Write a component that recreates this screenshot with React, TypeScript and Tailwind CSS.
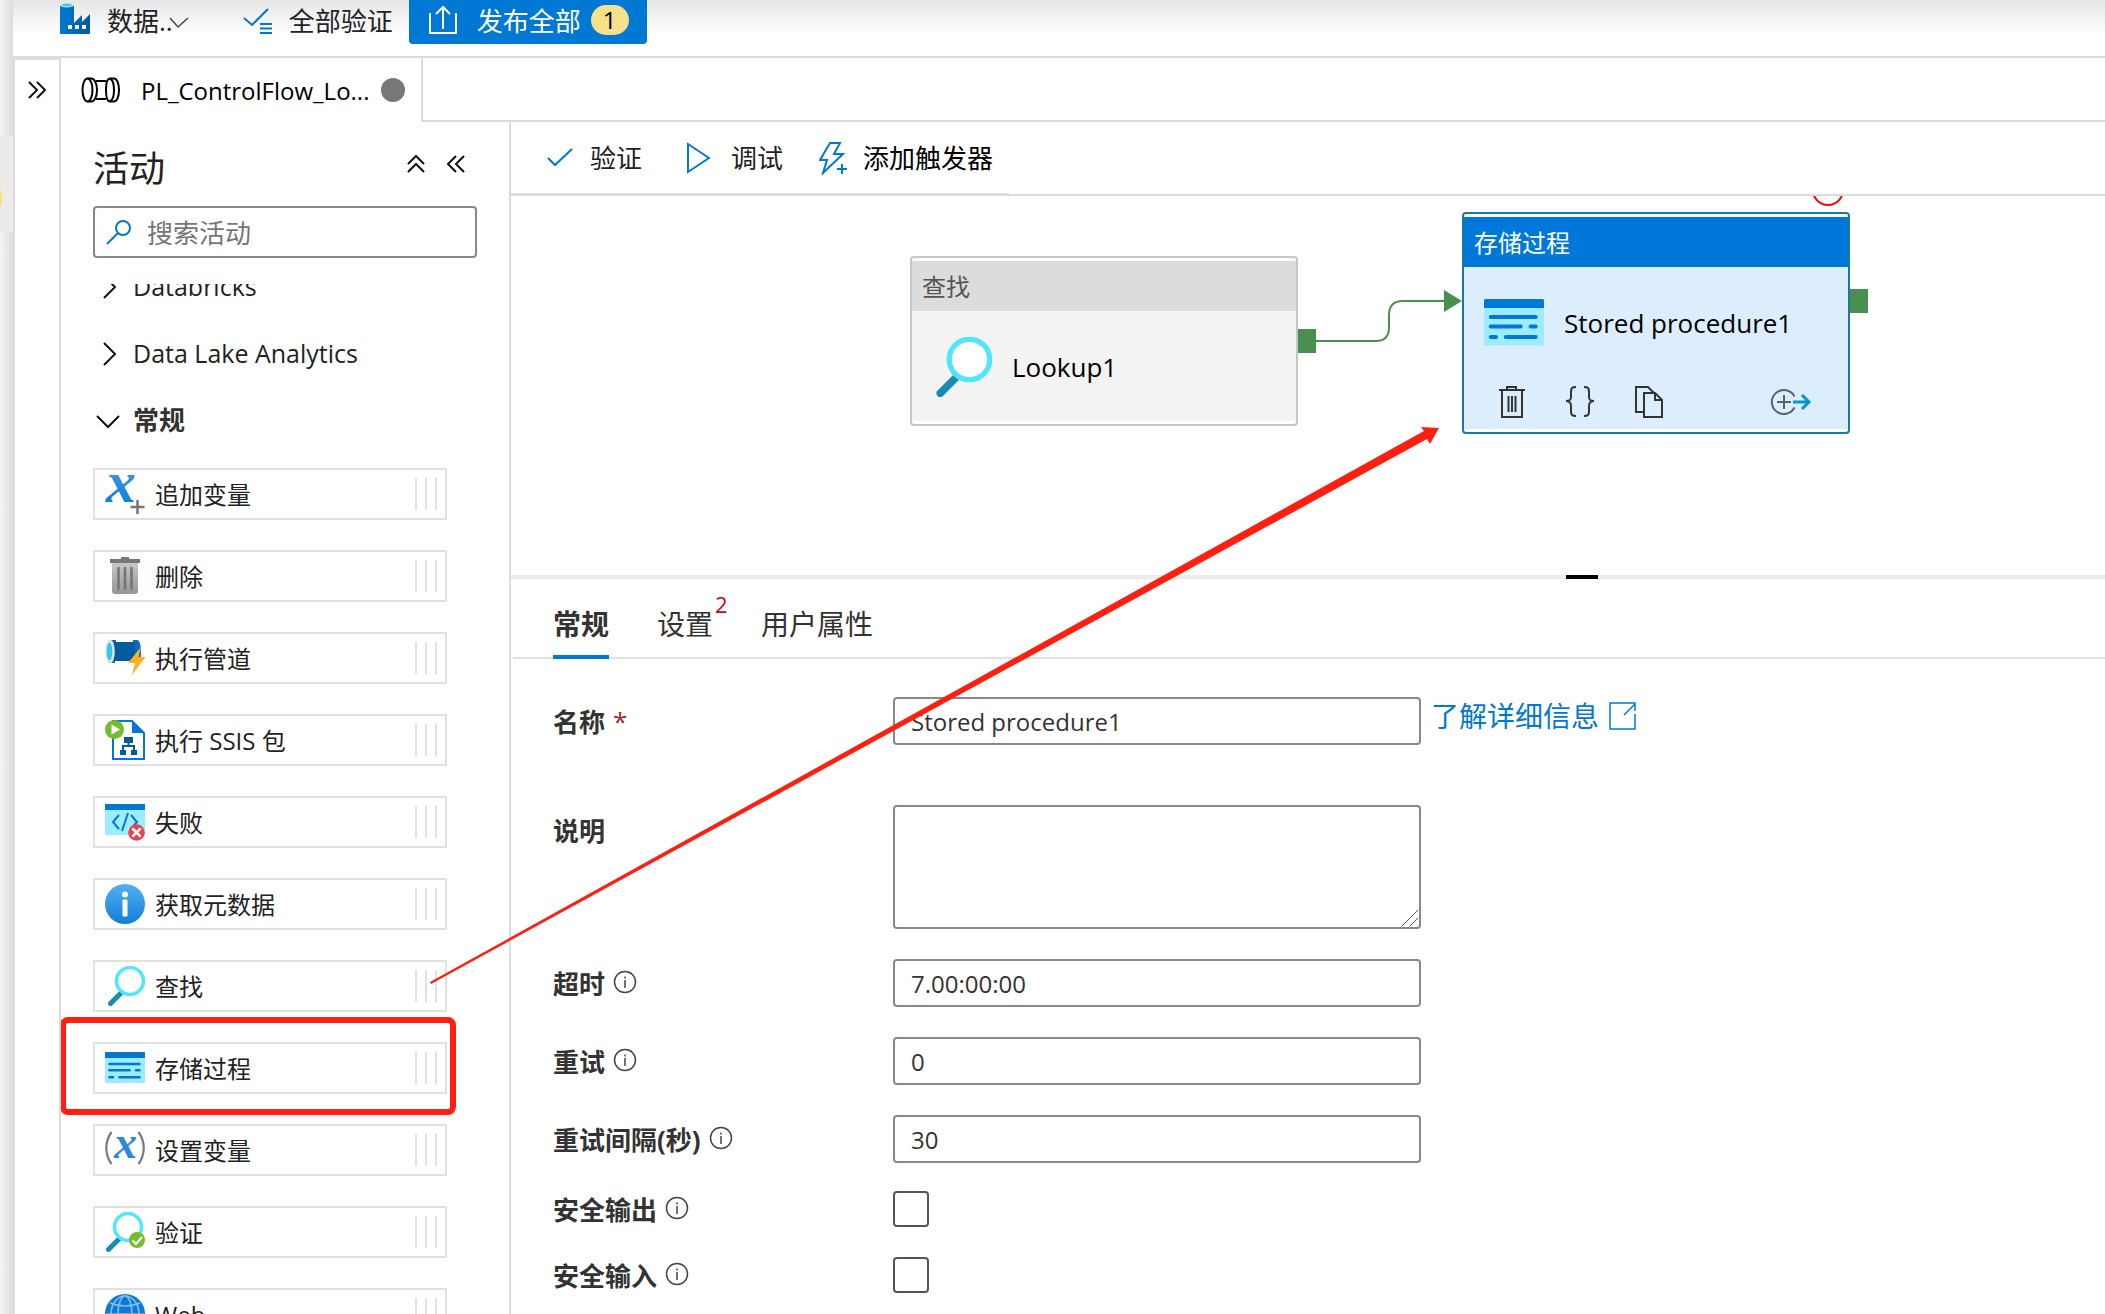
import { ReactNode, useState } from "react";

type Activity = {
  label: string;
  icon: ReactNode;
  selected?: boolean;
};

function FactoryIcon() {
  return (
    <svg width="32" height="32" viewBox="0 0 32 32" aria-hidden="true">
      <defs>
        <linearGradient id="factory" x1="0" x2="1">
          <stop offset="0" stopColor="#0078d4" />
          <stop offset="1" stopColor="#005ba1" />
        </linearGradient>
      </defs>
      <path d="M1 3h14v18l8-8v7l8-8v19a1 1 0 0 1-1 1H2a1 1 0 0 1-1-1z" fill="url(#factory)" />
      <ellipse cx="8" cy="3" rx="7" ry="2.5" fill="#e6e6e6" />
      <ellipse cx="8" cy="3" rx="5" ry="1.6" fill="#32d4f5" />
      <path d="M9 23h4v4H9zM16 23h4v4h-4zM23 23h4v4h-4z" fill="#fff" />
    </svg>
  );
}

function CheckIcon() {
  return (
    <svg width="28" height="20" viewBox="0 0 28 20" fill="none" stroke="#0078d4" strokeWidth="2" aria-hidden="true">
      <path d="M2 10l7 7L26 1" />
    </svg>
  );
}

function ValidateAllIcon() {
  return (
    <svg width="30" height="26" viewBox="0 0 30 26" fill="none" stroke="#0078d4" strokeWidth="2" aria-hidden="true">
      <path d="M1 10l8 7L25 1M17 16h12M17 20.500h12M17 25h12" />
    </svg>
  );
}

function PublishIcon() {
  return (
    <svg width="28" height="30" viewBox="0 0 28 30" fill="none" stroke="#fff" strokeWidth="2" aria-hidden="true">
      <path d="M1 8v20h26V8M14 24V2M7 9l7-7 7 7" />
    </svg>
  );
}

function PipelineIcon() {
  return (
    <svg width="40" height="26" viewBox="0 0 40 26" fill="none" stroke="#000" strokeWidth="2" aria-hidden="true">
      <ellipse cx="6.500" cy="13" rx="5" ry="11.500" />
      <path d="M6.500 1.500h4c3 0 5.500 5 5.500 11.500s-2.500 11.500-5.500 11.500h-4M15 4h10M15 22h10" />
      <path d="M29 1.500c-3 0-4 5-4 11.500s1 11.500 4 11.500M29 1.500h4c3 0 5 5 5 11.500s-2 11.500-5 11.500h-4" />
      <path d="M29 1.500c2 1 4 5 4 11.500s-2 10.500-4 11.500" />
    </svg>
  );
}

function DoubleChevron({ direction }: { direction: "right" | "left" | "up" }) {
  const paths = {
    right: "M2 2l8 8-8 8M10 2l8 8-8 8",
    left: "M10 2l-8 8 8 8M18 2l-8 8 8 8",
    up: "M2 10l8-8 8 8M2 18l8-8 8 8",
  };
  return (
    <svg width="20" height="20" viewBox="0 0 20 20" fill="none" stroke="#111" strokeWidth="2" aria-hidden="true">
      <path d={paths[direction]} />
    </svg>
  );
}

function Chevron({ open }: { open?: boolean }) {
  return (
    <svg width="26" height="26" viewBox="0 0 26 26" fill="none" stroke="#111" strokeWidth="2" aria-hidden="true">
      <path d={open ? "M2 8l11 11L24 8" : "M9 2l11 11L9 24"} />
    </svg>
  );
}

function MagnifierIcon({ size = 40, checked }: { size?: number; checked?: boolean }) {
  return (
    <svg width={size} height={size} viewBox="0 0 40 40" fill="none" aria-hidden="true">
      <path d={checked ? "M3.500 37.500L14 27" : "M5.500 37.500L16 27"} stroke="#198ab3" strokeWidth="5" strokeLinecap="round" />
      <circle cx={checked ? 23 : 25} cy="15" r="13.500" fill="#fff" stroke="#50e6ff" strokeWidth="3.500" />
      {checked && (
        <>
          <circle cx="32" cy="28" r="8" fill="#76bc2d" />
          <path d="M27.500 28.500l3.500 3.500 6-7" stroke="#fff" strokeWidth="2" />
        </>
      )}
    </svg>
  );
}

function StoredProcedureIcon({ size = 40 }: { size?: number }) {
  return (
    <svg width={size} height={size} viewBox="0 0 40 40" aria-hidden="true">
      <rect y="4" width="40" height="31" rx="1" fill="#9cebff" />
      <path d="M0 5a1 1 0 0 1 1-1h38a1 1 0 0 1 1 1v5H0z" fill="#0078d4" />
      <path
        d="M4.500 16h30M4.500 22.300h20M31 22.300h3.500M4.500 29.300h3.500M14.500 29.300h20"
        stroke="#0078d4"
        strokeWidth="2.600"
        strokeLinecap="round"
      />
    </svg>
  );
}

function AppendVariableIcon() {
  return (
    <svg width="40" height="40" viewBox="0 0 40 40" aria-hidden="true">
      <defs>
        <linearGradient id="variable" x1="0" x2="0" y1="0" y2="1">
          <stop offset="0" stopColor="#5ea0ef" />
          <stop offset="1" stopColor="#0078d4" />
        </linearGradient>
      </defs>
      <text x="1" y="28" fontFamily="Liberation Serif, serif" fontStyle="italic" fontWeight="700" fontSize="60" fill="url(#variable)">
        x
      </text>
      <path d="M32.500 26v14M25.500 33h14" stroke="#767676" strokeWidth="2.500" />
    </svg>
  );
}

function SetVariableIcon() {
  return (
    <svg width="40" height="40" viewBox="0 0 40 40" aria-hidden="true">
      <text x="9" y="28" fontFamily="Liberation Serif, serif" fontStyle="italic" fontWeight="700" fontSize="46" fill="#2f86e0">
        x
      </text>
      <path d="M6.500 2C-.5 12-.5 24 6.500 34M33.500 2c7 10 7 22 0 32" fill="none" stroke="#7a7a7a" strokeWidth="2.200" />
    </svg>
  );
}

function DeleteIcon() {
  return (
    <svg width="40" height="40" viewBox="0 0 40 40" aria-hidden="true">
      <defs>
        <linearGradient id="bin" x1="0" x2="0" y1="0" y2="1">
          <stop offset="0" stopColor="#c8c8c8" />
          <stop offset="1" stopColor="#969696" />
        </linearGradient>
      </defs>
      <path d="M7 6h26v29a3 3 0 0 1-3 3H10a3 3 0 0 1-3-3z" fill="url(#bin)" />
      <path d="M5 3h11V1h8v2h11v4H5z" fill="#767676" />
      <path d="M13.500 12v21M20 12v21M26.500 12v21" stroke="#767676" strokeWidth="2.600" strokeLinecap="round" />
    </svg>
  );
}

function ExecutePipelineIcon() {
  return (
    <svg width="40" height="40" viewBox="0 0 40 40" aria-hidden="true">
      <path d="M5 2h6l-1 23H5zM28 2h4c3 0 4 6 4 12s-1 11-4 11h-4z" fill="#0f6cbd" />
      <path d="M9 4h21v19H9z" fill="#005ba1" />
      <ellipse cx="5" cy="13.500" rx="4.800" ry="12" fill="#dfe3e6" />
      <ellipse cx="4.500" cy="13.500" rx="2.800" ry="9" fill="#32c9e8" />
      <path d="M36 9L23 25h7l-3 12 13.500-18h-7z" fill="#ffb020" />
    </svg>
  );
}

function ExecuteSsisIcon() {
  return (
    <svg width="40" height="40" viewBox="0 0 40 40" aria-hidden="true">
      <path d="M8 1h19l12 12v26H8z" fill="#fff" stroke="#0078d4" strokeWidth="2" />
      <path d="M27 1v12h12z" fill="#0078d4" />
      <path d="M19 17h9v6h-9zM15 30h6v5h-6zM26 30h6v5h-6z" fill="#005ba1" />
      <path d="M23.500 22v4M18 31v-5h11v5" fill="none" stroke="#005ba1" strokeWidth="2" />
      <circle cx="9.500" cy="9.500" r="9.500" fill="#76bc2d" />
      <path d="M6.500 4.500v10l8.500-5z" fill="#fff" />
    </svg>
  );
}

function FailIcon() {
  return (
    <svg width="40" height="40" viewBox="0 0 40 40" fill="none" aria-hidden="true">
      <rect y="2" width="40" height="31" rx="1" fill="#9cebff" />
      <path d="M0 2h40v6H0z" fill="#0078d4" />
      <path d="M14 13l-6 7 6 7M26 13l6 7-6 7M23 11l-6 18" stroke="#0078d4" strokeWidth="2" />
      <circle cx="31.500" cy="30.500" r="8.300" fill="#ef4050" />
      <path d="M28 27l7 7M35 27l-7 7" stroke="#fff" strokeWidth="2.500" strokeLinecap="round" />
    </svg>
  );
}

function MetadataIcon() {
  return (
    <svg width="40" height="40" viewBox="0 0 40 40" aria-hidden="true">
      <defs>
        <linearGradient id="meta" x1="0" x2="0" y1="0" y2="1">
          <stop offset="0" stopColor="#55aef0" />
          <stop offset="1" stopColor="#1080d8" />
        </linearGradient>
      </defs>
      <circle cx="20" cy="20" r="20" fill="url(#meta)" />
      <circle cx="20" cy="10.500" r="3" fill="#fff" />
      <rect x="17.500" y="15.500" width="5" height="17" rx="1" fill="#fff" />
    </svg>
  );
}

function WebIcon() {
  return (
    <svg width="40" height="40" viewBox="0 0 40 40" aria-hidden="true">
      <circle cx="20" cy="20" r="20" fill="#0f78d4" />
      <g fill="none" stroke="#7fc0f5" strokeWidth="1.600">
        <ellipse cx="20" cy="20" rx="7" ry="18" />
        <ellipse cx="20" cy="20" rx="14" ry="18" />
        <path d="M5 9c9 4 21 4 30 0M1 20h38" />
      </g>
    </svg>
  );
}

function InfoIcon() {
  return (
    <svg width="24" height="24" viewBox="0 0 24 24" fill="none" stroke="#444" aria-hidden="true">
      <circle cx="12" cy="12" r="10.500" strokeWidth="1.500" />
      <path d="M12 10v8M12 6.500v2" strokeWidth="1.500" />
    </svg>
  );
}

const activities: Activity[] = [
  { label: "追加变量", icon: <AppendVariableIcon /> },
  { label: "删除", icon: <DeleteIcon /> },
  { label: "执行管道", icon: <ExecutePipelineIcon /> },
  { label: "执行 SSIS 包", icon: <ExecuteSsisIcon /> },
  { label: "失败", icon: <FailIcon /> },
  { label: "获取元数据", icon: <MetadataIcon /> },
  { label: "查找", icon: <MagnifierIcon /> },
  { label: "存储过程", icon: <StoredProcedureIcon />, selected: true },
  { label: "设置变量", icon: <SetVariableIcon /> },
  { label: "验证", icon: <MagnifierIcon checked /> },
  { label: "Web", icon: <WebIcon /> },
];

function TopBar() {
  return (
    <header className="flex h-[58px] shrink-0 items-start border-b-2 border-[#dcdcdc] bg-linear-to-b from-[#e6e6e6] to-white to-[36px] pl-[46px] text-[26px] leading-[42px] text-[#222]">
      <button className="flex h-[42px] items-start gap-4">
        <span className="pt-[2px]">
          <FactoryIcon />
        </span>
        <span className="flex items-center">
          数据..
          <svg className="mt-1 -ml-1" width="20" height="14" viewBox="0 0 20 14" fill="none" stroke="#444" strokeWidth="1.500" aria-hidden="true">
            <path d="M1 2l8 9 10-9" />
          </svg>
        </span>
      </button>
      <button className="ml-[54px] flex h-[42px] items-center gap-4">
        <ValidateAllIcon />
        全部验证
      </button>
      <button className="ml-4 flex h-11 items-start rounded-b bg-[#0078d4] pr-[18px] pl-5 text-white">
        <span className="pt-[5px]">
          <PublishIcon />
        </span>
        <span className="ml-5">发布全部</span>
        <span className="mt-[5px] ml-[10px] h-[30px] w-[38px] rounded-full bg-[#f7e08a] text-center text-[24px] leading-[30px] text-black">
          1
        </span>
      </button>
    </header>
  );
}

function ActivityPane() {
  const [query, setQuery] = useState("");

  return (
    <aside className="flex w-[450px] shrink-0 flex-col border-r-2 border-[#dcdcdc]">
      <div className="flex h-[84px] items-center gap-5 pr-[43px] pl-8">
        <h2 className="mr-auto pt-[10px] text-[36px] leading-[48px] text-[#222]">活动</h2>
        <button aria-label="全部折叠">
          <DoubleChevron direction="up" />
        </button>
        <button aria-label="收起">
          <DoubleChevron direction="left" />
        </button>
      </div>
      <label className="mr-8 ml-8 flex h-[52px] shrink-0 items-center gap-[14px] rounded border-2 border-[#888] pl-[10px]">
        <svg width="28" height="28" viewBox="0 0 28 28" fill="none" stroke="#0078d4" strokeWidth="2" className="shrink-0" aria-hidden="true">
          <circle cx="18" cy="10" r="7" />
          <path d="M13 15L2 26" />
        </svg>
        <input
          aria-label="搜索活动"
          placeholder="搜索活动"
          value={query}
          onChange={(event) => setQuery(event.target.value)}
          className="w-full pt-[2px] text-[26px] leading-9 outline-none placeholder:text-[#767676]"
        />
      </label>
      <div className="mt-[26px] min-h-0 flex-1 overflow-hidden">
        <div className="-mt-[31px] pr-[62px] pl-8">
          {["Databricks", "Data Lake Analytics"].map((group) => (
            <button key={group} className="flex h-[67px] w-full items-center gap-3 pl-[2px] text-[25px] font-medium text-[#222]">
              <Chevron />
              {group}
            </button>
          ))}
          <button className="flex h-[67px] w-full items-center gap-3 pl-[2px] text-[26px] font-bold text-[#333]">
            <Chevron open />
            常规
          </button>
          <ul className="mt-[14px] flex flex-col gap-[30px]">
            {activities.map((activity) => (
              <li key={activity.label} className="relative flex h-[52px] items-center gap-[10px] border-2 border-[#e1e1e1] bg-white pr-2 pl-[10px] text-[24px] text-[#222]">
                {activity.icon}
                <span className="pt-[2px]">{activity.label}</span>
                <span className="ml-auto flex h-8 w-[22px] justify-between border-x-2 border-[#e1e1e1] px-2">
                  <span className="w-[2px] bg-[#e1e1e1]" />
                </span>
                {activity.selected && (
                  <span className="absolute -top-[27px] -right-[11px] -bottom-[23px] -left-[35px] rounded-lg border-6 border-[#ff1f10]" />
                )}
              </li>
            ))}
          </ul>
        </div>
      </div>
    </aside>
  );
}

function NodeActions() {
  return (
    <div className="mt-auto flex items-center pr-9 pb-[10px] pl-[34px]">
      <button aria-label="删除">
        <svg width="28" height="34" viewBox="0 0 28 34" fill="none" stroke="#333" strokeWidth="2" aria-hidden="true">
          <path d="M1 5h26M4 5v27h20V5M9 5V2h9v3M10.500 11v16M14 11v16M17.500 11v16" />
        </svg>
      </button>
      <button aria-label="代码" className="ml-[39px]">
        <svg width="30" height="34" viewBox="0 0 30 34" fill="none" stroke="#333" strokeWidth="2" aria-hidden="true">
          <path d="M11 2c-4 0-5 1-5 5v5c0 3-1 4-5 4 4 0 5 2 5 5v5c0 4 1 5 5 5M19 2c4 0 5 1 5 5v5c0 3 1 4 5 4-4 0-5 2-5 5v5c0 4-1 5-5 5" />
        </svg>
      </button>
      <button aria-label="复制" className="ml-[39px]">
        <svg width="30" height="34" viewBox="0 0 30 34" fill="none" stroke="#333" strokeWidth="2" aria-hidden="true">
          <path d="M9 27H2V2h12l6 6M10 8h11l7 7v17H10zM21 8v7h7" />
        </svg>
      </button>
      <button aria-label="添加输出" className="ml-auto">
        <svg width="42" height="28" viewBox="0 0 42 28" fill="none" aria-hidden="true">
          <path d="M24.500 8.500A12 12 0 1 0 24.500 19.500M7 14h14M14 7v14" stroke="#5b5f77" strokeWidth="2" />
          <path d="M23 14h15M32 7l7 7-7 7" stroke="#0099cc" strokeWidth="3" />
        </svg>
      </button>
    </div>
  );
}

function Canvas() {
  return (
    <section className="relative h-[379px] shrink-0 overflow-hidden">
      <svg className="absolute top-0 left-[787px]" width="572" height="160" fill="none" aria-hidden="true">
        <path d="M18 145h60q13 0 13-14v-12q0-14 14-14h42" stroke="#498f4f" strokeWidth="2" />
        <path d="M0 133h18v24H0zM146 94l18 11-18 11zM552 93h18v24h-18z" fill="#498f4f" />
        <circle cx="530" cy="-6" r="15" stroke="#ff0000" strokeWidth="2" />
      </svg>
      <div className="absolute top-[60px] left-[399px] flex h-[170px] w-[388px] flex-col rounded border-2 border-[#c6c6c6] bg-white py-[3px]">
        <div className="h-[50px] bg-[#dcdcdc] pl-[10px] text-[24px] leading-[52px] text-[#555]">查找</div>
        <div className="flex flex-1 items-center gap-5 bg-[#f3f3f3] pt-[2px] pl-5 text-[26px] text-black">
          <MagnifierIcon size={60} />
          Lookup1
        </div>
      </div>
      <div className="absolute top-4 left-[951px] flex h-[222px] w-[388px] flex-col rounded border-2 border-[#1a7a9e] bg-white py-[3px]">
        <div className="h-[50px] bg-[#0078d9] pl-[10px] text-[24px] leading-[52px] text-white">存储过程</div>
        <div className="flex flex-1 flex-col bg-[#dceefe]">
          <div className="flex h-[112px] items-center gap-5 pl-5 text-[26px] text-black">
            <StoredProcedureIcon size={60} />
            Stored procedure1
          </div>
          <NodeActions />
        </div>
      </div>
    </section>
  );
}

function FieldLabel({ htmlFor, children, info, required }: { htmlFor: string; children: string; info?: boolean; required?: boolean }) {
  return (
    <label htmlFor={htmlFor} className="flex w-[340px] shrink-0 items-center gap-2 text-[26px] leading-12 font-bold text-[#333]">
      <span className="pt-[2px]">{children}</span>
      {required && <span className="font-normal text-[#a4262c]">*</span>}
      {info && (
        <span className="pb-[2px]">
          <InfoIcon />
        </span>
      )}
    </label>
  );
}

const inputClass = "w-[528px] rounded border-2 border-[#888] bg-white px-4 pt-[2px] text-[24px] text-[#333] outline-none";

function PropertiesPanel() {
  const [name, setName] = useState("Stored procedure1");
  const [description, setDescription] = useState("");
  const [timeout, setTimeoutValue] = useState("7.00:00:00");
  const [retry, setRetry] = useState("0");
  const [interval, setIntervalValue] = useState("30");

  const textRows = [
    { id: "timeout", label: "超时", value: timeout, onChange: setTimeoutValue },
    { id: "retry", label: "重试", value: retry, onChange: setRetry },
    { id: "interval", label: "重试间隔(秒)", value: interval, onChange: setIntervalValue },
  ];

  return (
    <section className="flex flex-col">
      <nav className="ml-[2px] flex h-20 border-b-2 border-[#e1e1e1] pl-10 text-[28px] leading-[90px] text-[#333]">
        <button className="-mb-[2px] border-b-4 border-[#0078d4] font-bold">常规</button>
        <button className="ml-12 flex">
          设置
          <span className="w-12 pl-[2px] text-left text-[22px] leading-[50px] text-[#d0021b]">2</span>
        </button>
        <button>用户属性</button>
      </nav>
      <form className="flex flex-col pt-[38px] pl-[42px]">
        <div className="flex h-12">
          <FieldLabel htmlFor="name" required>
            名称
          </FieldLabel>
          <input id="name" value={name} onChange={(event) => setName(event.target.value)} className={inputClass} />
          <a href="#" className="ml-[10px] flex h-[38px] items-center gap-[10px] text-[28px] text-[#0078d4]">
            了解详细信息
            <svg width="28" height="28" viewBox="0 0 28 28" fill="none" stroke="#0078d4" strokeWidth="1.500" aria-hidden="true">
              <path d="M18 1H1v26h25V12M15 13L26 2M18 1h8v8" />
            </svg>
          </a>
        </div>
        <div className="mt-[60px] flex items-start">
          <FieldLabel htmlFor="description">说明</FieldLabel>
          <div className="relative flex">
            <textarea
              id="description"
              value={description}
              onChange={(event) => setDescription(event.target.value)}
              className={`${inputClass} h-[124px] resize-none`}
            />
            <svg className="absolute right-[2px] bottom-[2px]" width="18" height="18" viewBox="0 0 18 18" stroke="#555" aria-hidden="true">
              <path d="M1 17L17 1M9 17l8-8" />
            </svg>
          </div>
        </div>
        <div className="mt-[30px] flex flex-col gap-[30px]">
          {textRows.map((row) => (
            <div key={row.id} className="flex h-12">
              <FieldLabel htmlFor={row.id} info>
                {row.label}
              </FieldLabel>
              <input id={row.id} value={row.value} onChange={(event) => row.onChange(event.target.value)} className={inputClass} />
            </div>
          ))}
        </div>
        <div className="mt-[22px] flex flex-col gap-[18px]">
          {["安全输出", "安全输入"].map((label) => (
            <div key={label} className="flex h-12 items-center">
              <FieldLabel htmlFor={label} info>
                {label}
              </FieldLabel>
              <input id={label} type="checkbox" className="size-9 appearance-none rounded border-2 border-[#555] bg-white checked:bg-[#0078d4]" />
            </div>
          ))}
        </div>
      </form>
    </section>
  );
}

export default function App() {
  return (
    <div className="relative flex h-screen overflow-hidden bg-white font-['Open_Sans','Noto_Sans_CJK_SC',sans-serif]">
      <div className="w-[13px] shrink-0 bg-linear-to-r from-[#f5f5f5] to-[#dcdcdc] pt-[136px]">
        <div className="flex h-24 items-center overflow-hidden bg-[#ecebe9] pt-7">
          <span className="-ml-5 h-7 w-[22px] shrink-0 rounded-full bg-[#fde27a]" />
        </div>
      </div>

      <div className="flex min-w-0 flex-1 flex-col">
        <TopBar />
        <div className="flex min-h-0 flex-1">
          <div className="flex w-12 shrink-0 items-start justify-center border-x-2 border-t-2 border-[#dcdcdc] pt-5">
            <button aria-label="展开">
              <DoubleChevron direction="right" />
            </button>
          </div>
          <div className="flex min-w-0 flex-1 flex-col">
            <div className="flex h-16 shrink-0">
              <button className="flex w-[362px] shrink-0 items-center border-r-2 border-[#dcdcdc] pl-5 text-[24px] text-black">
                <PipelineIcon />
                <span className="ml-5 pt-[2px]">PL_ControlFlow_Lo...</span>
                <span className="ml-3 size-6 shrink-0 rounded-full bg-[#777]" />
              </button>
              <div className="flex-1 border-b-2 border-[#dcdcdc]" />
            </div>
            <div className="flex min-h-0 flex-1">
              <ActivityPane />
              <main className="flex min-w-0 flex-1 flex-col">
                <div className="flex h-[74px] shrink-0 border-b-2 border-[#dcdcdc] text-[26px] text-[#222]">
                  <div className="flex border-b border-[#dcdcdc] pr-4 pl-[35px]">
                    <button className="flex items-center gap-4">
                      <CheckIcon />
                      <span className="pt-[2px]">验证</span>
                    </button>
                    <button className="ml-[45px] flex items-center gap-5">
                      <svg width="24" height="32" viewBox="0 0 24 32" fill="none" stroke="#0078d4" strokeWidth="2" aria-hidden="true">
                        <path d="M1 2v28l21-14z" />
                      </svg>
                      <span className="pt-[2px]">调试</span>
                    </button>
                    <button className="ml-9 flex items-center gap-4 text-black">
                      <svg width="28" height="34" viewBox="0 0 28 34" fill="none" stroke="#0078d4" strokeWidth="2" aria-hidden="true">
                        <path d="M11 2h10l-6 11h9L4 32l4-13H1zM23 23v10M18 28h10" />
                      </svg>
                      <span className="pt-[2px]">添加触发器</span>
                    </button>
                  </div>
                </div>
                <Canvas />
                <div className="flex h-1 shrink-0 bg-[#ececec] pl-[1055px]">
                  <div className="w-8 bg-black" />
                </div>
                <PropertiesPanel />
              </main>
            </div>
          </div>
        </div>
      </div>

      <svg className="pointer-events-none absolute top-0 left-0" width="1450" height="1000" fill="#ff1f10" aria-hidden="true">
        <path d="M430 982L1424 431l-3-4 18 1-9 16-3-5L431 984z" />
      </svg>
    </div>
  );
}
